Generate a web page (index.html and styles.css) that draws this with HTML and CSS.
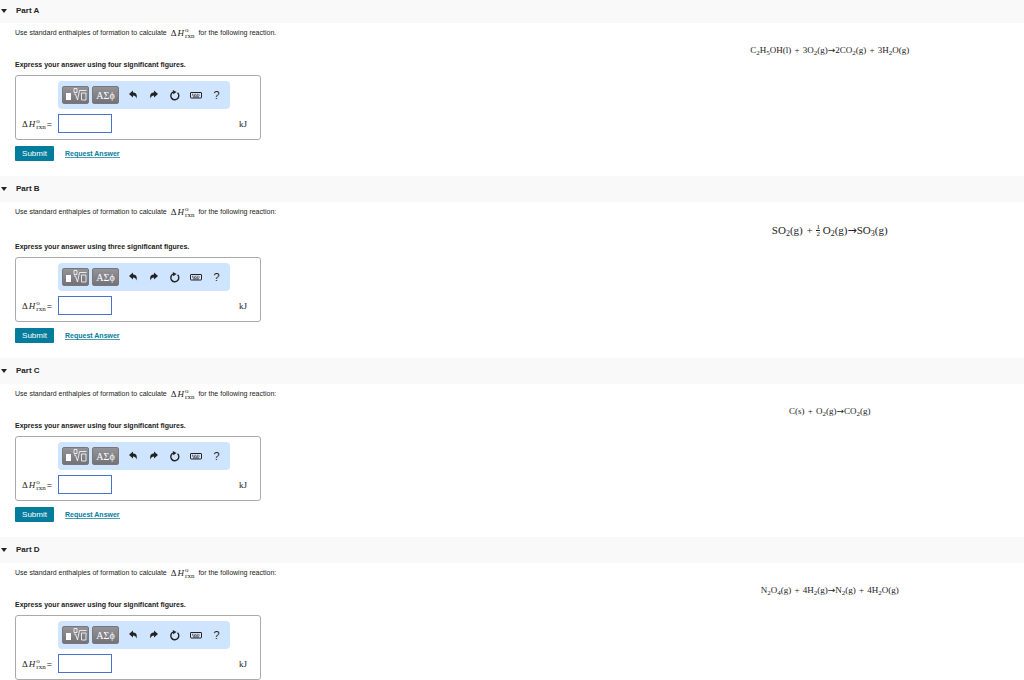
FILE: index.html
```html
<!DOCTYPE html>
<html lang="en">
<head>
    <meta charset="UTF-8">
    <meta name="viewport" content="width=device-width, initial-scale=1.0">
    <title>Enthalpies of Formation</title>
    <link rel="stylesheet" href="styles.css">
</head>
<body>
    <div id="parts"></div>

    <script src="script.js"></script>
</body>
</html>
```
FILE: styles.css
```css
* {
    box-sizing: border-box;
}

body {
    margin: 0;
    background-color: #fff;
    color: #222;
    font-family: "Liberation Sans", Arial, sans-serif;
    font-size: 7px;
    line-height: 12px;
}

/* part header */
.part-header {
    display: flex;
    align-items: center;
    gap: 9px;
    margin: 0;
    padding: 7px 1px;
    background-color: #f9f9f9;
    font-size: 8px;
    font-weight: bold;
}

.part:first-child .part-header {
    padding: 5px 1px 6px;
}

.caret {
    border: 3px solid transparent;
    border-top: 4px solid #222;
    border-bottom: 0;
}

.part-body {
    padding: 4px 0 15px 15px;
}

.part:last-child .part-body {
    padding-bottom: 0;
}

.part-body p {
    margin: 0;
}

.question {
    display: flex;
    gap: 4px;
    white-space: nowrap;
}

.instructions {
    font-weight: bold;
}

/* math */
.math {
    font-family: "Liberation Serif", "Times New Roman", serif;
}

.symbol {
    display: inline-flex;
    align-items: center;
    gap: 1px;
    font-size: 9px;
}

.scripts {
    display: flex;
    flex-direction: column;
    font-size: 7px;
    line-height: 6px;
}

.equation {
    display: flex;
    align-items: center;
    justify-content: center;
    height: 20px;
    padding-top: 2px;
    margin-left: 61%;
    padding-left: 5px;
    font-size: 9px;
    white-space: pre;
}

.equation sub {
    font-size: 7px;
    line-height: 1px;
    vertical-align: -2px;
}

.equation-large {
    height: 23px;
    font-size: 11px;
}

.equation-large sub {
    font-size: 8px;
}

.plus {
    margin: 0 1px;
}

.arrow {
    font-family: "DejaVu Sans", sans-serif;
    line-height: 1px;
}

.fraction {
    display: inline-flex;
    flex-direction: column;
    vertical-align: middle;
    font-size: 7px;
    line-height: 6px;
}

.fraction span:first-child {
    border-bottom: 1px solid #222;
}

/* answer box */
.answer-box {
    width: 246px;
    margin-top: 4px;
    padding: 5px 13px 6px 6px;
    border: 1px solid #aaa;
    border-radius: 3px;
}

.toolbar {
    display: flex;
    align-items: center;
    width: 172px;
    height: 28px;
    margin-left: 36px;
    padding-left: 4px;
    border-radius: 4px;
    background-color: #cfe5ff;
}

.toolbar button {
    display: flex;
    align-items: center;
    justify-content: center;
    width: 21px;
    height: 18px;
    padding: 0;
    border: 0;
    background: none;
    color: #222;
    font-family: inherit;
    font-size: 11px;
}

.toolbar .palette {
    width: 27px;
    margin-right: 3px;
    border: 1px solid #77777c;
    border-radius: 2px;
    background: linear-gradient(#949498, #737377);
    color: #fff;
    font-family: "Liberation Serif", "Times New Roman", serif;
    font-size: 10px;
}

.answer-row {
    display: flex;
    align-items: center;
    margin-top: 5px;
    font-size: 9px;
}

.answer-row label {
    display: flex;
    align-items: center;
    gap: 1px;
    width: 36px;
}

.answer-row input {
    width: 54px;
    height: 19px;
    padding: 1px 3px;
    border: 1px solid #4674cd;
    background-color: #fff;
    font-size: 9px;
}

.unit {
    margin-left: auto;
}

.actions {
    display: flex;
    align-items: center;
    gap: 11px;
    margin-top: 6px;
}

.submit {
    width: 39px;
    height: 15px;
    padding: 0;
    border: 0;
    border-radius: 1px;
    background-color: #047c9b;
    color: #fff;
    font-family: inherit;
    font-size: 8px;
}

.request {
    border-bottom: 1px solid #4d9db3;
    color: #047c9b;
    font-weight: bold;
    line-height: 7px;
    text-decoration: none;
}
```
FILE: script.js
```js
const plus = '<span class="plus"> + </span>';
const arrow = '<span class="arrow">→</span>';

const parts = [
    {
        name: "A",
        figures: "four",
        end: ".",
        equation: `C<sub>2</sub>H<sub>5</sub>OH(l)${plus}3O<sub>2</sub>(g)${arrow}2CO<sub>2</sub>(g)${plus}3H<sub>2</sub>O(g)`
    },
    {
        name: "B",
        figures: "three",
        end: ":",
        large: true,
        equation: `SO<sub>2</sub>(g)${plus}<span class="fraction"><span>1</span><span>2</span></span> O<sub>2</sub>(g)${arrow}SO<sub>3</sub>(g)`
    },
    {
        name: "C",
        figures: "four",
        end: ":",
        equation: `C(s)${plus}O<sub>2</sub>(g)${arrow}CO<sub>2</sub>(g)`
    },
    {
        name: "D",
        figures: "four",
        end: ":",
        equation: `N<sub>2</sub>O<sub>4</sub>(g)${plus}4H<sub>2</sub>(g)${arrow}N<sub>2</sub>(g)${plus}4H<sub>2</sub>O(g)`
    }
];

const symbol = '<span class="math symbol"><span>Δ</span><i>H</i><span class="scripts"><span>o</span><span>rxn</span></span></span>';

const toolbar = `
    <div class="toolbar">
        <button type="button" class="palette">
            <svg width="23" height="14" viewBox="0 0 23 14" fill="none" stroke="#fff">
                <rect x="2" y="5" width="5" height="7" fill="#fff" stroke="none"/>
                <path d="M10 .5h3v4h-3zM10 6h1.500l2 6 2-9.500h7M17.500 5h4.500v7h-4.500z" stroke-width=".8"/>
            </svg>
        </button>
        <button type="button" class="palette">ΑΣϕ</button>
        <button type="button">
            <svg width="10" height="10" viewBox="0 0 10 10">
                <path d="M1 4l4-3.500v2c3 0 4.500 2 3.500 6-.5-2-1.500-3-3.500-3v2z" fill="#222"/>
            </svg>
        </button>
        <button type="button">
            <svg width="10" height="10" viewBox="0 0 10 10">
                <path d="M9 4L5 .5v2C2 2.500.5 4.500 1.500 8.500c.5-2 1.500-3 3.500-3v2z" fill="#222"/>
            </svg>
        </button>
        <button type="button">
            <svg width="11" height="11" viewBox="0 0 11 11">
                <path d="M4 2.200a4 4 0 1 0 4.500 .6" fill="none" stroke="#222" stroke-width="1.400"/>
                <path d="M3.800 0l3.800 1.900-3.400 2.400z" fill="#222"/>
            </svg>
        </button>
        <button type="button">
            <svg width="12" height="8" viewBox="0 0 12 8">
                <rect x=".5" y="1.500" width="11" height="5.500" rx=".5" fill="#dceaff" stroke="#222"/>
                <path d="M2 3.300h8M2.500 4.600h7" stroke="#222" stroke-width=".8" stroke-dasharray="1 .6"/>
                <path d="M3 5.900h6" stroke="#222" stroke-width=".8"/>
            </svg>
        </button>
        <button type="button">?</button>
    </div>`;

document.getElementById("parts").innerHTML = parts.map((part, index) => `
    <section class="part">
        <h2 class="part-header"><span class="caret"></span>Part ${part.name}</h2>
        <div class="part-body">
            <p class="question">
                <span>Use standard enthalpies of formation to calculate</span>
                ${symbol}
                <span>for the following reaction${part.end}</span>
            </p>
            <div class="math equation ${part.large ? "equation-large" : ""}"><span>${part.equation}</span></div>
            <p class="instructions">Express your answer using ${part.figures} significant figures.</p>
            <div class="answer-box">
                ${toolbar}
                <div class="answer-row">
                    <label for="answer${part.name}">${symbol} =</label>
                    <input type="text" id="answer${part.name}">
                    <span class="math unit">kJ</span>
                </div>
            </div>
            ${index < parts.length - 1 ? `
            <div class="actions">
                <button type="button" class="submit">Submit</button>
                <a href="#" class="request">Request Answer</a>
            </div>` : ""}
        </div>
    </section>
`).join("");
```
